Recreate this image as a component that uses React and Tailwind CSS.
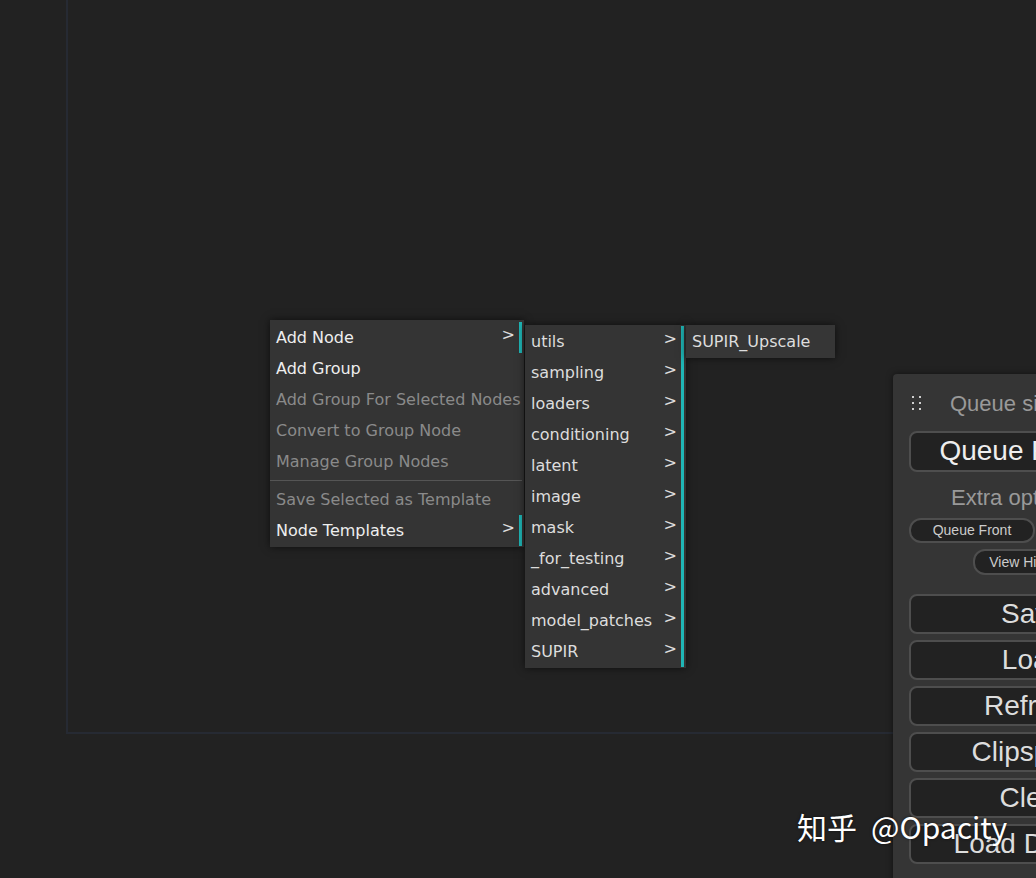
import React from "react";

const menuFont = { fontFamily: '"DejaVu Sans", Verdana, sans-serif' };

function Entry({ label, disabled, sub, bright }) {
  return (
    <div
      className={`relative h-[31px] flex items-center pl-[6px] text-[16px] tracking-[0px] ${
        sub ? "border-r-[3px] border-[#1fb5b5]" : ""
      } ${disabled ? "text-[#8a8a8a]" : bright ? "text-[#eeeeee]" : "text-[#dddddd]"}`}
    >
      <span className="whitespace-nowrap">{label}</span>
      {sub && <span className="absolute right-[4px] top-[1px] text-[#dddddd]">&gt;</span>}
    </div>
  );
}

export default function App() {
  const subItems = [
    "utils",
    "sampling",
    "loaders",
    "conditioning",
    "latent",
    "image",
    "mask",
    "_for_testing",
    "advanced",
    "model_patches",
    "SUPIR",
  ];
  const bigButtons = ["Save", "Load", "Refresh", "Clipspace", "Clear", "Load Default"];
  return (
    <div className="relative w-[1036px] h-[878px] overflow-hidden bg-[#222222]">
      {/* canvas group outline */}
      <div className="absolute left-[66px] top-[-2px] w-[900px] h-[736px] border-l-2 border-b-2 border-[#262a33]" />

      {/* main context menu */}
      <div
        className="absolute left-[270px] top-[320px] w-[254px] bg-[#343434] pt-[2px] pb-[1px] pr-[2px] shadow-[0_0_8px_rgba(0,0,0,0.6)]"
        style={menuFont}
      >
        <Entry label="Add Node" sub bright />
        <Entry label="Add Group" bright />
        <Entry label="Add Group For Selected Nodes" disabled />
        <Entry label="Convert to Group Node" disabled />
        <Entry label="Manage Group Nodes" disabled />
        <div className="h-[7px] flex items-center">
          <div className="h-px w-full bg-[#555555]" />
        </div>
        <Entry label="Save Selected as Template" disabled />
        <Entry label="Node Templates" sub bright />
      </div>

      {/* submenu */}
      <div
        className="absolute left-[525px] top-[325px] w-[161px] bg-[#343434] pt-[1px] pb-[1px] pr-[2px] shadow-[0_0_8px_rgba(0,0,0,0.6)] flex flex-col"
        style={menuFont}
      >
        {subItems.map((s) => (
          <Entry key={s} label={s} sub />
        ))}
      </div>

      {/* third menu */}
      <div
        className="absolute left-[686px] top-[325px] w-[149px] bg-[#363636] pt-[1px] pb-[1px] shadow-[0_0_8px_rgba(0,0,0,0.6)]"
        style={menuFont}
      >
        <Entry label="SUPIR_Upscale" />
      </div>

      {/* queue panel */}
      <div
        className="absolute left-[893px] top-[374px] w-[280px] h-[560px] bg-[#353535] rounded-[4px] px-[16px] pt-[12px] shadow-[0_0_6px_rgba(0,0,0,0.5)]"
        style={{ fontFamily: '"Liberation Sans", Arial, sans-serif' }}
      >
        <div className="flex items-center h-[34px]">
          <div className="grid grid-cols-2 gap-x-[5px] gap-y-[4px] ml-[3px] mr-[29px]">
            {[0, 1, 2, 3, 4, 5].map((i) => (
              <div key={i} className="w-[2px] h-[2px] bg-[#cfcfcf]" />
            ))}
          </div>
          <span className="text-[22px] text-[#999999] whitespace-nowrap">Queue size: 0</span>
        </div>
        <button className="mt-[11px] w-full h-[41px] rounded-[8px] bg-[#222222] border-2 border-[#4e4e4e] text-[28px] leading-none pb-[1px] pr-[5px] text-[#eeeeee] whitespace-nowrap">
          Queue Prompt
        </button>
        <div className="mt-[7px] h-[36px] flex items-center pl-[42px] text-[22px] text-[#999999] whitespace-nowrap">
          Extra options
        </div>
        <div className="flex gap-[4px] mt-[3px]">
          <button className="w-[126px] h-[25px] rounded-[12px] bg-[#222222] border-2 border-[#4e4e4e] text-[14px] text-[#cccccc] whitespace-nowrap">
            Queue Front
          </button>
          <button className="w-[100px] h-[25px] rounded-[12px] bg-[#222222] border-2 border-[#4e4e4e] text-[14px] text-[#cccccc] whitespace-nowrap">
            See Queue
          </button>
        </div>
        <div className="flex mt-[6px] pl-[64px]">
          <button className="w-[110px] h-[26px] rounded-[12px] bg-[#222222] border-2 border-[#4e4e4e] text-[14px] text-[#cccccc] whitespace-nowrap">
            View History
          </button>
        </div>
        <div className="flex flex-col gap-[6px] mt-[19px]">
          {bigButtons.map((b) => (
            <button
              key={b}
              className="w-full h-[40px] rounded-[8px] bg-[#222222] border-2 border-[#4e4e4e] text-[28px] leading-none text-[#dddddd] whitespace-nowrap"
            >
              {b}
            </button>
          ))}
        </div>
      </div>

      {/* watermark */}
      <div
        className="absolute left-[797px] top-[804px] flex items-center gap-[14px] text-[30px] text-white whitespace-nowrap [text-shadow:0_0_3px_rgba(0,0,0,0.6)]"
        style={{ fontFamily: '"Noto Sans CJK SC", "Noto Sans", sans-serif' }}
      >
        <span>知乎</span>
        <span>@Opacity</span>
      </div>
    </div>
  );
}
